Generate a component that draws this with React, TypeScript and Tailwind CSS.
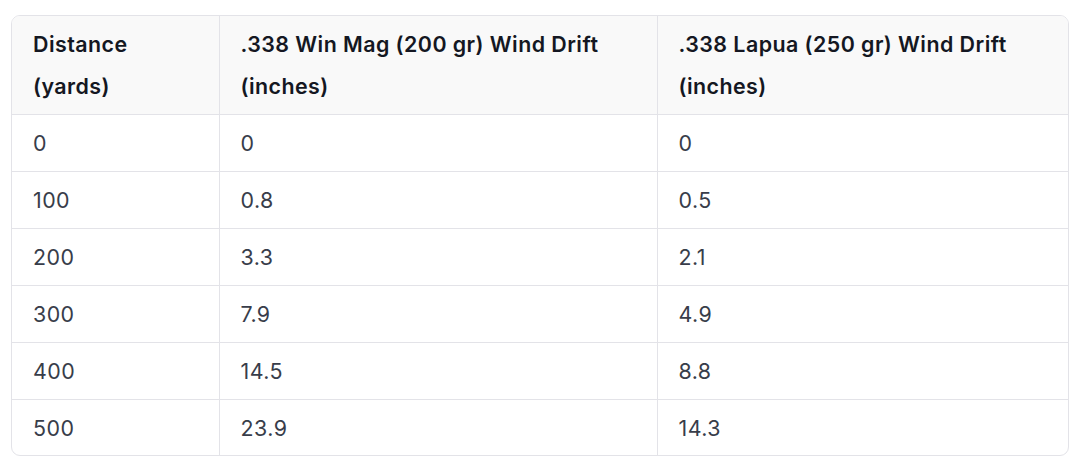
const rows = [
  ["0", "0", "0"],
  ["100", "0.8", "0.5"],
  ["200", "3.3", "2.1"],
  ["300", "7.9", "4.9"],
  ["400", "14.5", "8.8"],
  ["500", "23.9", "14.3"],
];

export default function App() {
  return (
    <div className="min-h-[465px] bg-white pl-[11px] pr-[11px] pt-[15px] font-['Inter',sans-serif]">
      <div className="w-[1058px] overflow-hidden rounded-[9px] border border-[#e3e3e8]">
        <table className="w-full table-fixed border-collapse text-left text-[21.4px] leading-[41.6px] tracking-[0.45px]">
          <colgroup>
            <col className="w-[207px]" />
            <col className="w-[438px]" />
            <col />
          </colgroup>
          <thead className="bg-[#f9f9f9]">
            <tr>
              <th className="px-[21px] pt-[8px] pb-[6.4px] align-top font-semibold text-[#141722]">
                Distance (yards)
              </th>
              <th className="border-l border-[#e3e3e8] px-[21px] pt-[8px] pb-[6.4px] align-top font-semibold text-[#141722]">
                .338 Win Mag (200 gr) Wind Drift (inches)
              </th>
              <th className="border-l border-[#e3e3e8] px-[21px] pt-[8px] pb-[6.4px] align-top font-semibold text-[#141722]">
                .338 Lapua (250 gr) Wind Drift (inches)
              </th>
            </tr>
          </thead>
          <tbody className="text-[#383d4a]">
            {rows.map((r, i) => (
              <tr key={i} className="border-t border-[#e3e3e8]">
                <td className="px-[21px] pt-[8px] pb-[6.4px]">{r[0]}</td>
                <td className="border-l border-[#e3e3e8] px-[21px] pt-[8px] pb-[6.4px]">{r[1]}</td>
                <td className="border-l border-[#e3e3e8] px-[21px] pt-[8px] pb-[6.4px]">{r[2]}</td>
              </tr>
            ))}
          </tbody>
        </table>
      </div>
    </div>
  );
}
